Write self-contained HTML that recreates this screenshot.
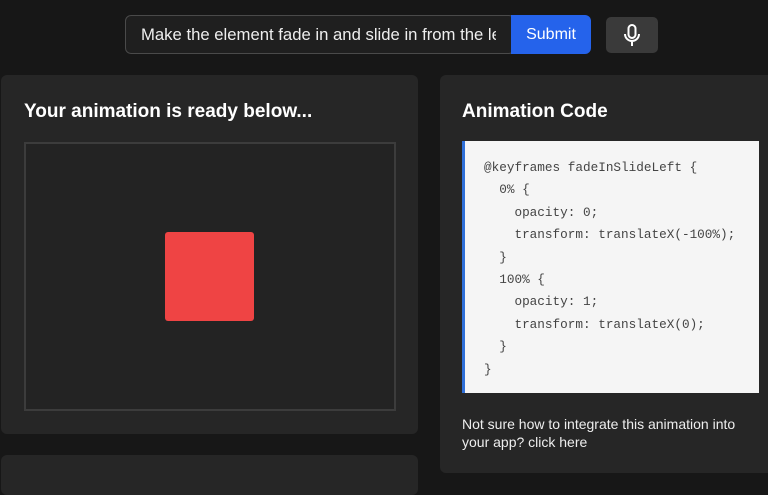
<!DOCTYPE html>
<html><head><style>
*{margin:0;padding:0;box-sizing:border-box}
body{width:768px;height:476px;background:#171717;font-family:"Liberation Sans",sans-serif;position:relative;overflow:hidden;color:#fff}
.inp{position:absolute;left:125px;top:15px;width:390px;height:39px;border:1px solid #4a4a4a;border-radius:6px;background:#1f1f1f;font-size:16.7px;color:#eee;padding:9px 0 0 15px;white-space:nowrap}
.inp span{display:block;width:355px;overflow:hidden}
.sub{position:absolute;left:511px;top:15px;width:80px;height:39px;background:#2563eb;border-radius:0 6px 6px 0;font-size:16px;text-align:center;line-height:39px}
.mic{position:absolute;left:606px;top:17px;width:52px;height:36px;background:#3a3a3a;border-radius:5px}
.card{position:absolute;background:#262626;border-radius:6px}
h2{position:absolute;font-size:19px;font-weight:bold;color:#fff}
.prev{position:absolute;left:24px;top:142px;width:372px;height:269px;border:2px solid #3c3c3c;background:#232323}
.sq{position:absolute;left:165px;top:232px;width:89px;height:89px;background:#ef4444;border-radius:3px}
.code{position:absolute;left:462px;top:141px;width:297px;height:252px;background:#f5f5f5;border-left:3px solid #2f6fd8;font-family:"Liberation Mono",monospace;font-size:12.7px;color:#444;line-height:22.4px;padding:16px 0 0 19px;white-space:pre}
.note{position:absolute;left:462px;top:415px;font-size:14px;line-height:18px;color:#eee;width:300px}
</style></head><body>
<div class="inp"><span>Make the element fade in and slide in from the left</span></div>
<div class="sub">Submit</div>
<div class="mic"><svg width="52" height="36" viewBox="0 0 52 36"><rect x="22.5" y="8" width="7" height="13" rx="3.5" fill="none" stroke="#fff" stroke-width="2"/><path d="M19 17a7 7 0 0 0 14 0M26 24v5" fill="none" stroke="#fff" stroke-width="2"/></svg></div>
<div class="card" style="left:1px;top:75px;width:417px;height:359px"></div>
<div class="card" style="left:1px;top:455px;width:417px;height:40px"></div>
<div class="card" style="left:440px;top:75px;width:340px;height:398px"></div>
<h2 style="left:24px;top:101px">Your animation is ready below...</h2>
<h2 style="left:462px;top:101px">Animation Code</h2>
<div class="prev"></div>
<div class="sq"></div>
<div class="code">@keyframes fadeInSlideLeft {
  0% {
    opacity: 0;
    transform: translateX(-100%);
  }
  100% {
    opacity: 1;
    transform: translateX(0);
  }
}</div>
<div class="note">Not sure how to integrate this animation into your app? click here</div>
</body></html>
